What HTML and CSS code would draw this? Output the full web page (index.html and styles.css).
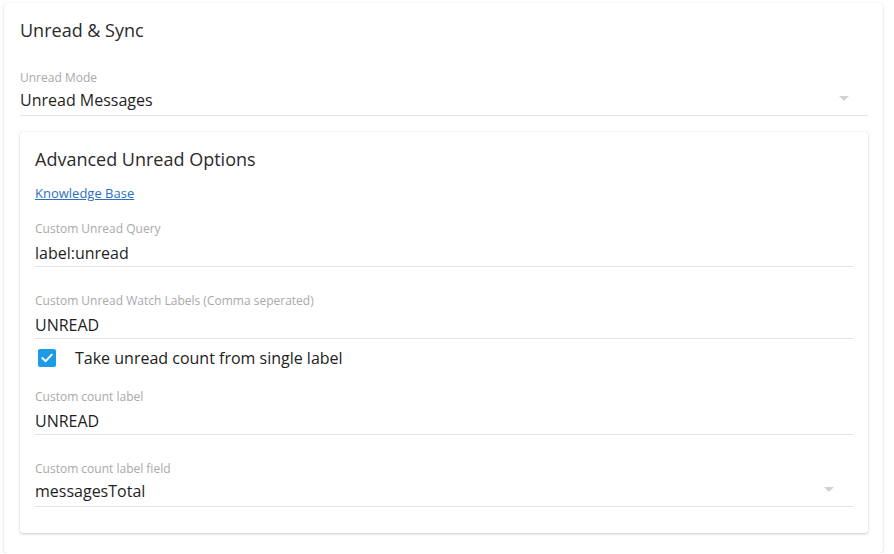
FILE: index.html
```html
<!DOCTYPE html>
<html lang="en">
<head>
<meta charset="utf-8">
<title>Unread &amp; Sync</title>
<link rel="stylesheet" href="styles.css">
</head>
<body>
<section class="card">
  <h2 class="card-title">Unread &amp; Sync</h2>
  <div class="field first">
    <div class="field-label">Unread Mode</div>
    <div class="field-value select">Unread Messages<span class="caret"></span></div>
  </div>
  <section class="inner-card">
    <h3 class="card-title">Advanced Unread Options</h3>
    <a class="kb-link" href="#">Knowledge Base</a>
    <div class="field first-inner">
      <div class="field-label">Custom Unread Query</div>
      <div class="field-value">label:unread</div>
    </div>
    <div class="field">
      <div class="field-label">Custom Unread Watch Labels (Comma seperated)</div>
      <div class="field-value">UNREAD</div>
    </div>
    <label class="check-row">
      <span class="checkbox">
        <svg width="14" height="14" viewBox="0 0 14 14"><path d="M2.5 7.2 L5.6 10.2 L11.6 3.9" fill="none" stroke="#fff" stroke-width="2" stroke-linecap="square"/></svg>
      </span>
      <span class="check-text">Take unread count from single label</span>
    </label>
    <div class="field after-check">
      <div class="field-label">Custom count label</div>
      <div class="field-value">UNREAD</div>
    </div>
    <div class="field">
      <div class="field-label">Custom count label field</div>
      <div class="field-value select">messagesTotal<span class="caret"></span></div>
    </div>
  </section>
</section>
</body>
</html>
```
FILE: styles.css
```css
html, body {
  margin: 0;
  padding: 0;
  background: #ffffff;
}
body {
  font-family: "Open Sans", "Liberation Sans", sans-serif;
  color: #222;
}
.card {
  box-sizing: border-box;
  margin: 3px 11px 0 4px;
  width: 879px;
  height: 550px;
  padding: 15px 15px 20px 16px;
  background: #fff;
  border-radius: 4px;
  box-shadow: 0 1px 3px rgba(0, 0, 0, 0.16), 0 0 1px rgba(0, 0, 0, 0.08);
}
.card-title {
  margin: 0;
  font-size: 18px;
  line-height: 24px;
  font-weight: 400;
  color: #2b2b2b;
}
.field {
  margin-top: 26px;
}
.field.first {
  margin-top: 28px;
}
.field-label {
  font-size: 12px;
  line-height: 16px;
  color: #a9a9a9;
}
.field-value {
  position: relative;
  margin-top: 4px;
  padding-bottom: 1px;
  font-size: 16px;
  line-height: 24px;
  color: #1f1f1f;
  border-bottom: 1px solid #e2e2e2;
}
.field-value.select {
  margin-top: 2px;
  padding-bottom: 3px;
}
.caret {
  position: absolute;
  right: 19px;
  top: 8px;
  width: 0;
  height: 0;
  border-left: 5px solid transparent;
  border-right: 5px solid transparent;
  border-top: 5px solid #d2d2d2;
}
.inner-card {
  margin-top: 16px;
  padding: 15px 15px 26px 15px;
  background: #fff;
  border-radius: 3px;
  box-shadow: 0 1px 3px rgba(0, 0, 0, 0.2), 0 0 1px rgba(0, 0, 0, 0.1);
}
.kb-link {
  display: inline-block;
  margin-top: 13px;
  font-size: 13px;
  line-height: 18px;
  color: #2a6fc0;
  text-decoration: underline;
}
.field.first-inner {
  margin-top: 18px;
}
.check-row {
  display: flex;
  align-items: center;
  margin-top: 7px;
  height: 24px;
}
.checkbox {
  display: flex;
  align-items: center;
  justify-content: center;
  width: 18px;
  height: 18px;
  margin-left: 3px;
  border-radius: 2px;
  background: #1d9be6;
}
.check-text {
  margin-left: 19px;
  font-size: 16px;
  line-height: 24px;
  color: #222;
}
.field.after-check {
  margin-top: 19px;
}
```
